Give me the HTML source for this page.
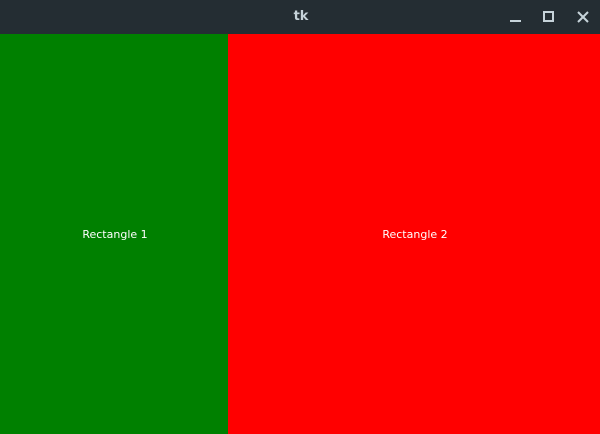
<!DOCTYPE html>
<html><head><style>
body{margin:0;width:600px;height:434px;overflow:hidden;font-family:"DejaVu Sans","Liberation Sans",sans-serif;position:relative}
#bar{position:absolute;left:0;top:0;width:600px;height:34px;background:#242d33}
#t{position:absolute;left:1px;width:600px;top:9px;text-align:center;color:#c6d3da;font-weight:bold;font-size:13px}
#g{position:absolute;left:0;top:34px;width:228px;height:400px;background:#008000}
#r{position:absolute;left:228px;top:34px;width:372px;height:400px;background:#ff0000}
.l{position:absolute;top:194px;left:1px;width:100%;text-align:center;color:#fff;font-size:11px}
</style></head><body>
<div id="bar"><div id="t">tk</div>
<svg style="position:absolute;left:0;top:0" width="600" height="34">
<g stroke="#c6d3da" stroke-width="2" fill="none">
<line x1="510" y1="21" x2="521" y2="21"/>
<rect x="544" y="12" width="9" height="9"/>
<line x1="578" y1="12" x2="588" y2="22"/><line x1="588" y1="12" x2="578" y2="22"/>
</g></svg></div>
<div id="g"><div class="l">Rectangle 1</div></div>
<div id="r"><div class="l">Rectangle 2</div></div>
</body></html>
